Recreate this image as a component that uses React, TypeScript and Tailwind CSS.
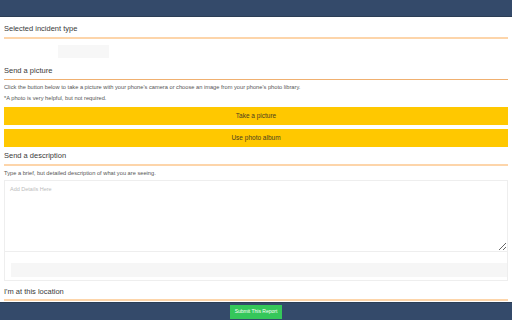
import React from "react";

const Heading = ({ children, className }: { children: React.ReactNode; className: string }) => (
  <h2 className={`text-[7.5px] leading-[10px] text-[#3a3a3a] ${className}`}>{children}</h2>
);

export default function App() {
  return (
    <div className="flex h-screen w-full flex-col bg-white font-['Liberation_Sans',Arial,sans-serif]">
      <header className="h-[17px] shrink-0 border-b border-[#2c3e55] bg-[#344a6a]" />

      <main className="flex-1 overflow-hidden px-[4px]">
        {/* Incident type */}
        <Heading className="mt-[7px]">Selected incident type</Heading>
        <div className="mt-[3px] h-[2px] bg-[#fdd5aa]" />
        <div className="ml-[54px] mt-[6px] h-[13px] w-[51px] bg-[#f7f7f7]" />

        {/* Picture */}
        <Heading className="mt-[8px]">Send a picture</Heading>
        <div className="mt-[3px] h-px bg-[#f0b070]" />
        <p className="mt-[3px] text-[5.7px] leading-[8px] text-[#555]">
          Click the button below to take a picture with your phone's camera or choose an image from your phone's photo library.
        </p>
        <p className="mt-[3px] text-[5.7px] leading-[8px] text-[#555]">*A photo is very helpful, but not required.</p>
        <button className="mt-[5px] flex h-[18px] w-full items-center justify-center bg-[#ffc800] text-[6.5px] text-[#4a4020]">
          Take a picture
        </button>
        <button className="mt-[4px] flex h-[18px] w-full items-center justify-center bg-[#ffc800] text-[6.5px] text-[#4a4020]">
          Use photo album
        </button>

        {/* Description */}
        <Heading className="mt-[4px]">Send a description</Heading>
        <div className="mt-[3px] h-[2px] bg-[#fdd5aa]" />
        <p className="mt-[3px] text-[5.7px] leading-[8px] text-[#555]">
          Type a brief, but detailed description of what you are seeing.
        </p>
        <div className="mt-[3px] border border-[#eee]">
          <textarea
            placeholder="Add Details Here"
            className="block h-[71px] w-full resize-y border-b border-[#eee] px-[5px] py-[4px] text-[5.5px] leading-[8px] text-[#555] outline-none placeholder:text-[#bbb]"
          />
          <div className="pb-[3px] pl-[6px] pt-[11px]">
            <div className="h-[14px] bg-[#f6f6f6]" />
          </div>
        </div>

        {/* Location */}
        <Heading className="mt-[6px]">I'm at this location</Heading>
        <div className="mt-[2px] h-[2px] bg-[#fdd5aa]" />
      </main>

      <footer className="flex h-[18px] shrink-0 items-center justify-center border-t border-[#2c3e55] bg-[#344a6a]">
        <button className="flex h-[14px] w-[52px] items-center justify-center bg-[#35c75a] text-[5px] text-white">
          Submit This Report
        </button>
      </footer>
    </div>
  );
}
